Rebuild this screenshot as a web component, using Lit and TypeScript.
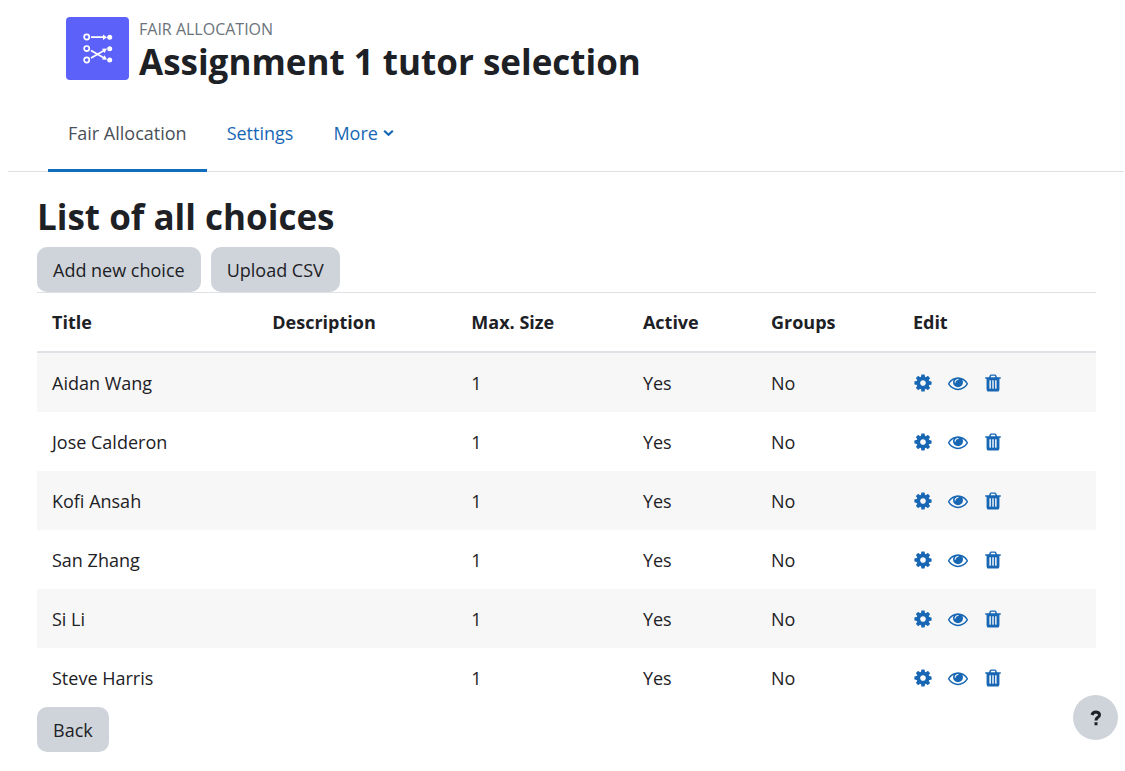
import { LitElement, html, css, svg } from "lit";
import { customElement } from "lit/decorators.js";

const cog = svg`<path d="M1152 896q0-106-75-181t-181-75-181 75-75 181 75 181 181 75 181-75 75-181zm512-109v222q0 12-8 23t-20 13l-185 28q-19 54-39 91 35 50 107 138 10 12 10 25t-9 23q-27 37-99 108t-94 71q-12 0-26-9l-138-108q-44 23-91 38-16 136-29 186-7 28-36 28h-222q-14 0-24.5-8.5t-11.5-21.5l-28-184q-49-16-90-37l-141 107q-10 9-25 9-14 0-25-11-126-114-165-168-7-10-7-23 0-12 8-23 15-21 51-66.5t54-70.5q-27-50-41-99l-183-27q-13-2-21-12.5t-8-23.5v-222q0-12 8-23t19-13l186-28q14-46 39-92-40-57-107-138-10-12-10-24 0-10 9-23 26-36 98.5-107.5t94.5-71.5q13 0 26 10l138 107q44-23 91-38 16-136 29-186 7-28 36-28h222q14 0 24.5 8.5t11.5 21.5l28 184q49 16 90 37l142-107q9-9 24-9 13 0 25 10 129 119 165 170 7 8 7 22 0 12-8 23-15 21-51 66.5t-54 70.5q26 50 41 98l183 28q13 2 21 12.5t8 23.5z"/>`;
const eye = svg`<path d="M1664 960q-152-236-381-353 61 104 61 225 0 185-131.5 316.5t-316.5 131.5-316.5-131.5-131.5-316.5q0-121 61-225-229 117-381 353 133 205 333.5 326.5t434.5 121.5 434.5-121.5 333.5-326.5zm-720-384q0-20-14-34t-34-14q-125 0-214.5 89.5t-89.5 214.5q0 20 14 34t34 14 34-14 14-34q0-86 61-147t147-61q20 0 34-14t14-34zm848 384q0 34-20 69-140 230-376.5 368.5t-499.5 138.5-499.5-139-376.5-368q-20-35-20-69t20-69q140-229 376.5-368t499.5-139 499.5 139 376.5 368q20 35 20 69z"/>`;
const trash = svg`<path d="M704 1376v-704q0-14-9-23t-23-9h-64q-14 0-23 9t-9 23v704q0 14 9 23t23 9h64q14 0 23-9t9-23zm256 0v-704q0-14-9-23t-23-9h-64q-14 0-23 9t-9 23v704q0 14 9 23t23 9h64q14 0 23-9t9-23zm256 0v-704q0-14-9-23t-23-9h-64q-14 0-23 9t-9 23v704q0 14 9 23t23 9h64q14 0 23-9t9-23zm-544-992h448l-48-117q-7-9-17-11h-317q-10 2-17 11zm928 32v64q0 14-9 23t-23 9h-96v948q0 83-47 143.5t-113 60.5h-832q-66 0-113-58.5t-47-141.5v-952h-96q-14 0-23-9t-9-23v-64q0-14 9-23t23-9h309l70-167q15-37 54-63t79-26h320q40 0 79 26t54 63l70 167h309q14 0 23 9t9 23z"/>`;

const actions = [
  { label: "Edit", icon: cog },
  { label: "Hide", icon: eye },
  { label: "Delete", icon: trash },
];

const choices = ["Aidan Wang", "Jose Calderon", "Kofi Ansah", "San Zhang", "Si Li", "Steve Harris"].map(
  (title) => ({ title, description: "", maxSize: 1, active: "Yes", groups: "No" })
);

@customElement("app-root")
export class AppRoot extends LitElement {
  static styles = css`
    :host {
      display: block;
      font-family: "Segoe UI", "Open Sans", "Noto Sans", sans-serif;
      font-size: 18px;
      line-height: 28px;
      color: #1d2125;
      background: #fff;
    }
    * { box-sizing: border-box; }
    h1, h2 { margin: 0; font-size: 35px; line-height: 42px; font-weight: 700; }
    a { color: #1767b5; text-decoration: none; }
    .header { display: flex; gap: 10px; padding: 17px 66px 0; }
    .logo {
      flex: none;
      display: grid;
      place-items: center;
      width: 63px;
      height: 63px;
      border-radius: 4px;
      background: #5b61f9;
    }
    .kind { font-size: 16px; line-height: 24px; color: #6a737b; text-transform: uppercase; }
    .tabs {
      display: flex;
      margin: 14px 1px 0 8px;
      padding: 0 40px;
      border-bottom: 1px solid #dee2e6;
    }
    .tab {
      display: flex;
      align-items: center;
      gap: 5px;
      height: 75px;
      margin-bottom: -1px;
      padding: 0 20px;
      border-bottom: 3px solid transparent;
    }
    .tab.active { color: #495057; border-color: #0f6cbf; }
    .content { padding: 24px 29px 18px 37px; }
    .buttons { display: flex; gap: 10px; margin-top: 9px; }
    .btn {
      height: 45px;
      padding: 0 16px;
      border: 0;
      border-radius: 10px;
      background: #ced4da;
      color: #1d2125;
      font: inherit;
      cursor: pointer;
    }
    table { width: 100%; table-layout: fixed; border-spacing: 0; }
    th, td { padding: 0 15px; text-align: left; }
    th { height: 61px; border-top: 1px solid #dee2e6; border-bottom: 2px solid #dee2e6; }
    td { height: 59px; }
    tbody tr:nth-child(odd) { background: #f7f7f7; }
    .c-title { width: 20.8%; }
    .c-desc { width: 18.8%; }
    .c-size { width: 16.2%; }
    .c-active { width: 12.1%; }
    .c-groups { width: 13.4%; }
    .actions { display: flex; gap: 15px; }
    .actions a { display: flex; }
    .actions svg { width: 20px; height: 20px; fill: currentColor; }
    .help {
      position: fixed;
      right: 7px;
      bottom: 31px;
      width: 45px;
      height: 45px;
      padding: 0;
      border: 0;
      border-radius: 50%;
      background: #ced4da;
      color: #1d2125;
      display: grid;
      place-items: center;
      cursor: pointer;
    }
  `;

  render() {
    return html`
      <header class="header">
        <div class="logo">
          <svg width="32" height="32" viewBox="0 0 32 32" fill="none" stroke="#fff" stroke-width="1.7">
            <circle cx="4.7" cy="4" r="2.6" /><circle cx="4.7" cy="15.6" r="2.6" /><circle cx="4.7" cy="27" r="2.6" />
            <path d="M9 4.2H22M9 17.5L23 25.500M9 25L23 17" />
            <g fill="#fff" stroke="none">
              <circle cx="27.700" cy="4.200" r="2.500" /><circle cx="27.700" cy="15.800" r="2.500" /><circle cx="27.700" cy="27" r="2.500" />
              <path d="M21 1.500L25 4.200L21 6.900ZM20 15.800L25 15.500L22.600 20ZM20 26.400L25 26.800L22.600 22.200Z" />
            </g>
          </svg>
        </div>
        <div>
          <div class="kind">Fair Allocation</div>
          <h1>Assignment 1 tutor selection</h1>
        </div>
      </header>
      <nav class="tabs">
        <a class="tab active" href="#" aria-current="page">Fair Allocation</a>
        <a class="tab" href="#">Settings</a>
        <a class="tab" href="#">More
          <svg width="11" height="8" viewBox="0 0 11 8" fill="none" stroke="currentColor" stroke-width="2.2"><path d="M1.200 1.700L5.500 5.800L9.800 1.700" /></svg>
        </a>
      </nav>
      <main class="content">
        <h2>List of all choices</h2>
        <div class="buttons">
          <button class="btn">Add new choice</button>
          <button class="btn">Upload CSV</button>
        </div>
        <table>
          <thead>
            <tr>
              <th class="c-title">Title</th>
              <th class="c-desc">Description</th>
              <th class="c-size">Max. Size</th>
              <th class="c-active">Active</th>
              <th class="c-groups">Groups</th>
              <th>Edit</th>
            </tr>
          </thead>
          <tbody>
            ${choices.map((c) => html`
              <tr>
                <td>${c.title}</td>
                <td>${c.description}</td>
                <td>${c.maxSize}</td>
                <td>${c.active}</td>
                <td>${c.groups}</td>
                <td>
                  <div class="actions">
                    ${actions.map((a) => html`<a href="#" aria-label="${a.label} ${c.title}"><svg viewBox="0 0 1792 1792">${a.icon}</svg></a>`)}
                  </div>
                </td>
              </tr>
            `)}
          </tbody>
        </table>
        <button class="btn">Back</button>
      </main>
      <button class="help" aria-label="Help">
        <svg width="12" height="16" viewBox="0 0 12 16" fill="none" stroke="currentColor" stroke-width="3"><path d="M2 5Q2.800 2 6 2Q9.500 2.200 9.500 5Q9.500 6.500 7.500 7.600Q6 8.500 6 10.500M6 12.300V15.300" /></svg>
      </button>
    `;
  }
}
